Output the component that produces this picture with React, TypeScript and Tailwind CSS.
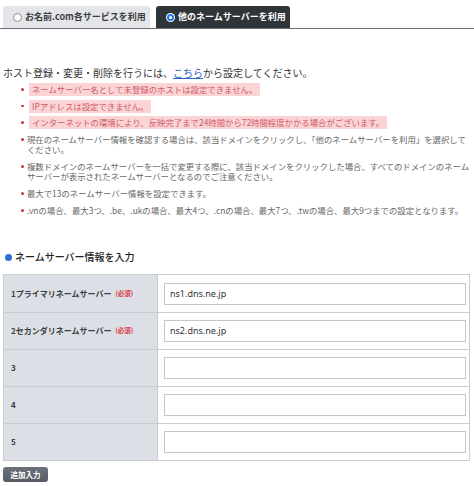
import React from "react";

const F = "font-['Noto_Sans_CJK_JP','Noto_Sans',sans-serif]";

function Req() {
  return <span className="text-[#d9363e] text-[6.5px] font-bold ml-[4px]">(必須)</span>;
}

const rows: { label: string; req: boolean; value: string }[] = [
  { label: "1プライマリネームサーバー", req: true, value: "ns1.dns.ne.jp" },
  { label: "2セカンダリネームサーバー", req: true, value: "ns2.dns.ne.jp" },
  { label: "3", req: false, value: "" },
  { label: "4", req: false, value: "" },
  { label: "5", req: false, value: "" },
];

export default function App() {
  return (
    <div className={`w-[474px] h-[486px] bg-white overflow-hidden text-[#333] ${F}`}>
      {/* Tabs */}
      <div className="flex items-end gap-[6px] pl-[3px] pt-[6px] border-b border-[#6b6f74]">
        <div className="w-[147px] h-[22px] bg-[#e3e5e8] rounded-t-[3px] flex items-center pl-[10px] gap-[3px]">
          <span className="w-[9px] h-[9px] rounded-full bg-white border border-[#8a8e93]" />
          <span className="text-[9px] leading-[12px] font-bold text-[#3a3d41] whitespace-nowrap">お名前.com各サービスを利用</span>
        </div>
        <div className="w-[134px] h-[22px] bg-[#2f3439] rounded-t-[3px] flex items-center pl-[10px] gap-[3px]">
          <span className="w-[9px] h-[9px] rounded-full bg-white flex items-center justify-center">
            <span className="w-[7px] h-[7px] rounded-full border-[2px] border-[#1f78e8] bg-white" />
          </span>
          <span className="text-[9px] leading-[12px] font-bold text-white whitespace-nowrap">他のネームサーバーを利用</span>
        </div>
      </div>

      {/* Intro */}
      <p className="mt-[37px] pl-[3px] text-[10px] leading-[14px] text-[#333] whitespace-nowrap">
        ホスト登録・変更・削除を行うには、<a className="text-[#2a63c8] underline">こちら</a>から設定してください。
      </p>

      {/* Notes */}
      <ul className="mt-[3px] pl-[21px] text-[8.4px] whitespace-nowrap">
        <li className="flex items-center mb-[3.5px]">
          <span className="w-[2.5px] h-[2.5px] rounded-full bg-[#c8323c] mr-[5.5px] shrink-0" />
          <span className="bg-[#fbd4d6] text-[#cf5a62] leading-[13px] px-[3px]">ネームサーバー名として未登録のホストは設定できません。</span>
        </li>
        <li className="flex items-center mb-[3.5px]">
          <span className="w-[2.5px] h-[2.5px] rounded-full bg-[#c8323c] mr-[5.5px] shrink-0" />
          <span className="bg-[#fbd4d6] text-[#cf5a62] leading-[13px] px-[3px]">IPアドレスは設定できません。</span>
        </li>
        <li className="flex items-center mb-[5px]">
          <span className="w-[2.5px] h-[2.5px] rounded-full bg-[#c8323c] mr-[5.5px] shrink-0" />
          <span className="bg-[#fbd4d6] text-[#cf5a62] leading-[13px] px-[3px]">インターネットの環境により、反映完了まで24時間から72時間程度かかる場合がございます。</span>
        </li>
        <li className="flex items-start mb-[7px] text-[#666] leading-[10px]">
          <span className="w-[2.5px] h-[2.5px] rounded-full bg-[#c8323c] mr-[3.5px] mt-[4px] shrink-0" />
          <span>現在のネームサーバー情報を確認する場合は、該当ドメインをクリックし、「他のネームサーバーを利用」を選択して<br />ください。</span>
        </li>
        <li className="flex items-start mb-[7px] text-[#666] leading-[10px]">
          <span className="w-[2.5px] h-[2.5px] rounded-full bg-[#c8323c] mr-[3.5px] mt-[4px] shrink-0" />
          <span>複数ドメインのネームサーバーを一括で変更する際に、該当ドメインをクリックした場合、すべてのドメインのネーム<br />サーバーが表示されたネームサーバーとなるのでご注意ください。</span>
        </li>
        <li className="flex items-start mb-[7px] text-[#666] leading-[10px]">
          <span className="w-[2.5px] h-[2.5px] rounded-full bg-[#c8323c] mr-[3.5px] mt-[4px] shrink-0" />
          <span>最大で13のネームサーバー情報を設定できます。</span>
        </li>
        <li className="flex items-start text-[#666] leading-[10px]">
          <span className="w-[2.5px] h-[2.5px] rounded-full bg-[#c8323c] mr-[3.5px] mt-[4px] shrink-0" />
          <span>.vnの場合、最大3つ、.be、.ukの場合、最大4つ、.cnの場合、最大7つ、.twの場合、最大9つまでの設定となります。</span>
        </li>
      </ul>

      {/* Heading */}
      <div className="mt-[35px] pl-[5px] flex items-center gap-[3px]">
        <span className="w-[7px] h-[7px] rounded-full bg-[#2d6fd4]" />
        <span className="text-[10px] leading-[14px] font-medium text-[#222]">ネームサーバー情報を入力</span>
      </div>

      {/* Table */}
      <div className="mt-[10px] ml-[3px] w-[467px] border border-[#c9cdd2]">
        {rows.map((r, i) => (
          <div key={i} className={`flex h-[37px] ${i > 0 ? "border-t border-[#c9cdd2]" : ""}`}>
            <div className="w-[154px] bg-[#dce0e6] border-r border-[#c9cdd2] flex items-center pl-[7px] shrink-0">
              <span className="text-[8px] font-bold text-[#3a3d42] whitespace-nowrap">{r.label}</span>
              {r.req && <Req />}
            </div>
            <div className="flex-1 flex items-center pl-[6px] pr-[3px]">
              <div className="w-full h-[22px] border border-[#c6c6c6] bg-white flex items-center pl-[5px] text-[9px] text-[#333] font-['Noto_Sans',sans-serif]">
                {r.value}
              </div>
            </div>
          </div>
        ))}
      </div>

      {/* Button */}
      <div className="mt-[6px] ml-[3px] w-[45px] h-[15px] rounded-[3px] bg-gradient-to-b from-[#6c717b] to-[#555a63] flex items-center justify-center">
        <span className="text-[7.5px] font-bold text-white leading-none">追加入力</span>
      </div>
    </div>
  );
}
